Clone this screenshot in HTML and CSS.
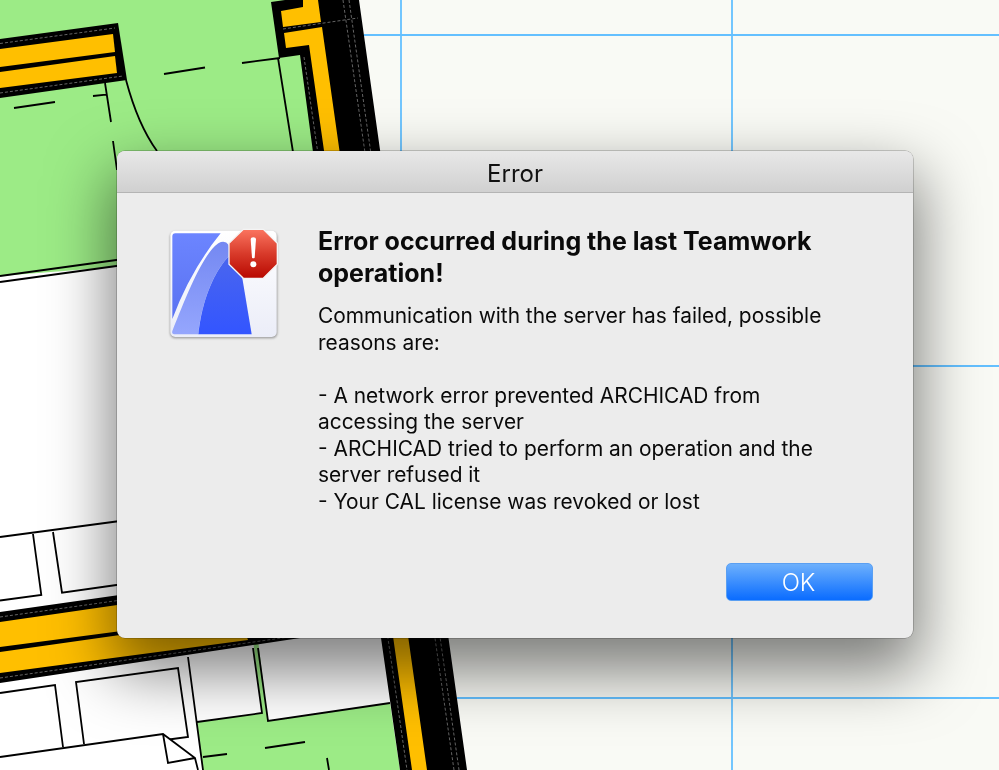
FILE: index.html
```html
<!DOCTYPE html>
<html lang="en">
<head>
<meta charset="utf-8">
<title>Error</title>
<link rel="stylesheet" href="styles.css">
</head>
<body>
<main class="desktop">
  <svg class="plan" width="999" height="770" viewBox="0 0 999 770" aria-hidden="true">
    <rect class="paper-bg" width="999" height="770"/>
    <g class="guide">
      <path d="M401 0V160M732 0V770M360 35H999M450 366H999M455 698H999"/>
    </g>
    <polygon class="white" points="0,0 359,0 467,770 0,770"/>
    <polygon class="green" points="0,0 300,0 330,250 0,276"/>
    <polygon class="green" points="197,722 262,713 253,640 258,640 268,721 390,703 400,770 203,770"/>
    <g class="wall">
      <polygon points="0,39 118,23 127,80 0,98"/>
      <polygon points="271,2 285,0 359,0 467,770 400,770 381,638 313,152 300,55 279,58"/>
      <polygon points="0,612 400,555 420,620 0,683"/>
    </g>
    <g class="yellow">
      <polygon points="0,49 113,34 115,52 0,67"/>
      <polygon points="0,72 115,56 117,73 0,88"/>
      <polygon points="281,11 303,7 303,0 318,0 321,22 283,27"/>
      <polygon points="284,33 322,27 427,770 412,770 309,45 286,48"/>
      <polygon points="0,622 200,593 205,620 0,647"/>
      <polygon points="0,652 240,618 248,640 0,673"/>
    </g>
    <g class="dash">
      <path d="M0 43.500 115 28M0 93 123 76M283 29 358 18M343 0 454 770M349 0 459 770M304 57 407 770M0 617 300 575M0 678 310 634"/>
    </g>
    <g class="line">
      <path d="M164 74 205 67.500M242 63 280 58M278 58 293 152M105 83 111 122M113 141 117 170M93 96 106 94.700M14 108 55 102"/>
      <path d="M126 80Q138 125 157 151"/>
      <path d="M0 276 120 259.500M0 282 120 265.500M0 537 120 521"/>
      <path d="M33 534 41.300 595 0 600.500M53 532 62 592.700 120 584.500"/>
      <path d="M0 693 55 685 63 747M84 744 76 682 178 668 188 737 165 740"/>
      <path d="M188 657 203 770M197 722 262 713 253 648M258 648 268 721 390 703"/>
      <path d="M265 748 305 742M203 757 227 754M327 758 329 770"/>
    </g>
    <path class="sheet" d="M0 757 163 734 195 758 198 770H0Z"/>
    <path class="sheet-line" d="M0 757 163 734 195 758 198 770M163 734 168 763 195 758"/>
  </svg>

  <section class="dialog" role="alertdialog" aria-labelledby="dialog-title">
    <header class="titlebar" id="dialog-title">Error</header>
    <div class="content">
      <svg class="app-icon" width="145" height="135" viewBox="0 0 435 405" aria-hidden="true">
        <defs>
          <linearGradient id="tile" x1="0" y1="0" x2="0" y2="1"><stop offset="0" stop-color="#ffffff"/><stop offset="1" stop-color="#ebedf8"/></linearGradient>
          <linearGradient id="panel" x1="0" y1="0" x2="0" y2="1"><stop offset="0" stop-color="#6c85ff"/><stop offset="1" stop-color="#5a72f2"/></linearGradient>
          <linearGradient id="arch" x1="0" y1="0" x2="0" y2="1"><stop offset="0" stop-color="#7488f2"/><stop offset="1" stop-color="#95a6fd"/></linearGradient>
          <linearGradient id="core" x1="0" y1="0" x2="0" y2="1"><stop offset="0" stop-color="#4a66ee"/><stop offset="1" stop-color="#3355ff"/></linearGradient>
          <linearGradient id="stop" x1="0" y1="0" x2="0" y2="1"><stop offset="0" stop-color="#fb7560"/><stop offset=".5" stop-color="#d83a2a"/><stop offset="1" stop-color="#b80800"/></linearGradient>
        </defs>
        <rect class="tile-shadow" x="60" y="50" width="322" height="320" rx="16"/>
        <rect x="61" y="47" width="319" height="319" rx="15" fill="url(#tile)"/>
        <path d="M67 64Q67 55 76 55H212Q122 165 67 312Z" fill="url(#panel)"/>
        <path d="M67 348C110 240 160 115 205 85Q225 74 236 90L240 120C190 170 155 260 145 358H76Q64 358 67 348Z" fill="url(#arch)"/>
        <path d="M145 358C155 260 190 170 240 120L277 190 305 358Z" fill="url(#core)"/>
        <polygon class="stop-sign" points="280,43 340,43 382,85 382,148 340,190 280,190 237,148 237,85" fill="url(#stop)"/>
        <path class="bang" d="M302 72Q302 67 310 67 318 67 318 72L314 128Q310 131 306 128Z"/>
        <circle class="bang" cx="310" cy="148" r="9"/>
      </svg>
      <div class="message">
        <h1 class="headline">Error occurred during the last Teamwork operation!</h1>
        <p class="details">Communication with the server has failed, possible reasons are:<br><br>- A network error prevented ARCHICAD from accessing the server<br>- ARCHICAD tried to perform an operation and the server refused it<br>- Your CAL license was revoked or lost</p>
      </div>
    </div>
    <footer class="actions">
      <button class="ok" type="button">OK</button>
    </footer>
  </section>
</main>
</body>
</html>
```

FILE: styles.css
```css
html, body {
  margin: 0;
  padding: 0;
}

body {
  width: 999px;
  height: 770px;
  overflow: hidden;
  font-family: Inter, "Liberation Sans", sans-serif;
}

.desktop {
  position: relative;
  width: 999px;
  height: 770px;
  overflow: hidden;
  background: #f9faf5;
  filter: blur(.4px);
}

.plan {
  position: absolute;
  inset: 0;
  display: block;
}

.paper-bg { fill: #f9faf5; }
.white { fill: #ffffff; }
.green { fill: #9ceb86; }
.wall { fill: #000000; }
.yellow { fill: #ffbf00; }

.guide path {
  fill: none;
  stroke: #64c0ff;
  stroke-width: 1.8;
}

.dash path {
  fill: none;
  stroke: #8f8f8f;
  stroke-width: .7;
  stroke-dasharray: 3 2;
}

.line path {
  fill: none;
  stroke: #000000;
  stroke-width: 1.8;
}

.sheet { fill: #ffffff; }

.sheet-line {
  fill: none;
  stroke: #000000;
  stroke-width: 1.8;
}

.dialog {
  position: absolute;
  left: 117px;
  top: 151px;
  width: 796px;
  height: 487px;
  box-sizing: border-box;
  display: flex;
  flex-direction: column;
  border-radius: 8px;
  background: #ececec;
  box-shadow: 0 0 0 .5px rgba(0, 0, 0, .35), 0 28px 62px 6px rgba(0, 0, 0, .5);
  overflow: hidden;
}

.titlebar {
  height: 41px;
  flex: none;
  border-bottom: 1px solid #b4b4b4;
  background: linear-gradient(#e8e8e8, #d0d0d0);
  color: #111111;
  font-size: 24px;
  line-height: 45px;
  text-align: center;
}

.content {
  flex: 1;
  display: flex;
  gap: 23px;
  padding: 22px 0 0 33px;
  min-height: 0;
}

.app-icon {
  flex: none;
  display: block;
}

.tile-shadow {
  fill: #9a9a9a;
  filter: blur(3px);
}

.stop-sign {
  stroke: #f4f4f4;
  stroke-width: 4;
}

.bang { fill: #ffffff; }

.message {
  width: 520px;
  padding-top: 10px;
  color: #0a0a0a;
}

.headline {
  margin: 0;
  font-size: 25px;
  line-height: 32px;
  font-weight: 700;
}

.details {
  margin: 14px 0 0;
  font-size: 20.900px;
  line-height: 26.500px;
}

.actions {
  flex: none;
  display: flex;
  justify-content: flex-end;
  padding: 0 40px 37px 0;
}

.ok {
  width: 147px;
  height: 38px;
  padding: 0 2px 0 0;
  border: 1px solid #5a9ff2;
  border-radius: 5px;
  background: linear-gradient(#6db0fc, #0a6cff);
  color: #ffffff;
  font-family: inherit;
  font-size: 24px;
  font-weight: 300;
}
```
